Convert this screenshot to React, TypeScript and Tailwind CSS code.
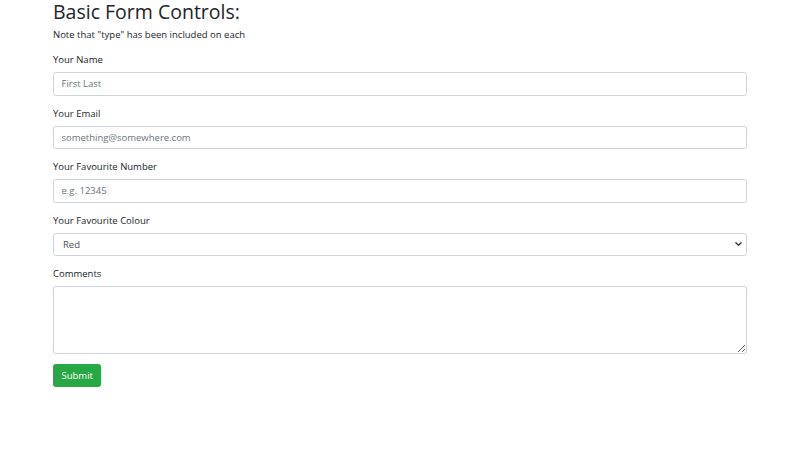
import { useState } from 'react';

const FONT = { fontFamily: '"Open Sans", "Noto Sans", sans-serif' };

const inputClass =
  'block w-full h-[23.5px] px-[7.5px] text-[9.5px] leading-[15px] text-[#495057] bg-white border border-[#ced4da] rounded-[2.5px] placeholder:text-[#6c757d] focus:outline-none';

function Field({ label, children }: { label: string; children: React.ReactNode }) {
  return (
    <div className="mb-[10px]">
      <label className="block mb-[5px] text-[9.5px] leading-[15px] text-[#212529]">{label}</label>
      {children}
    </div>
  );
}

export default function App() {
  const [colour, setColour] = useState('Red');

  return (
    <div className="min-h-[450px] bg-white px-[53px] text-[#212529]" style={FONT}>
      {/* Heading */}
      <h3 className="mb-[3px] text-[19.5px] leading-[24px] font-normal">Basic Form Controls:</h3>
      <p className="mb-[10px] text-[9.5px] leading-[15px]">Note that "type" has been included on each</p>

      <form onSubmit={(e) => e.preventDefault()}>
        <Field label="Your Name">
          <input type="text" placeholder="First Last" className={inputClass} />
        </Field>
        <Field label="Your Email">
          <input type="email" placeholder="something@somewhere.com" className={inputClass} />
        </Field>
        <Field label="Your Favourite Number">
          <input type="number" placeholder="e.g. 12345" className={inputClass} />
        </Field>
        <Field label="Your Favourite Colour">
          <div className="relative">
            <select
              value={colour}
              onChange={(e) => setColour(e.target.value)}
              className={`${inputClass} appearance-none pl-[9px] text-[#212529]`}
            >
              <option>Red</option>
              <option>Green</option>
              <option>Blue</option>
            </select>
            <svg
              className="absolute right-[5px] top-1/2 -translate-y-1/2 w-[7px] h-[7px] text-[#343a40] pointer-events-none"
              viewBox="0 0 16 16"
              fill="none"
              stroke="currentColor"
              strokeWidth={3}
              strokeLinecap="round"
              strokeLinejoin="round"
            >
              <path d="M2 5l6 6 6-6" />
            </svg>
          </div>
        </Field>
        <Field label="Comments">
          <textarea rows={4} className={`${inputClass} h-[68px] py-[4px] resize-y`} />
        </Field>

        <button
          type="submit"
          className="block h-[23px] px-[7.5px] text-[9.5px] leading-[15px] text-white bg-[#28a745] border border-[#28a745] rounded-[2.5px]"
        >
          Submit
        </button>
      </form>
    </div>
  );
}
